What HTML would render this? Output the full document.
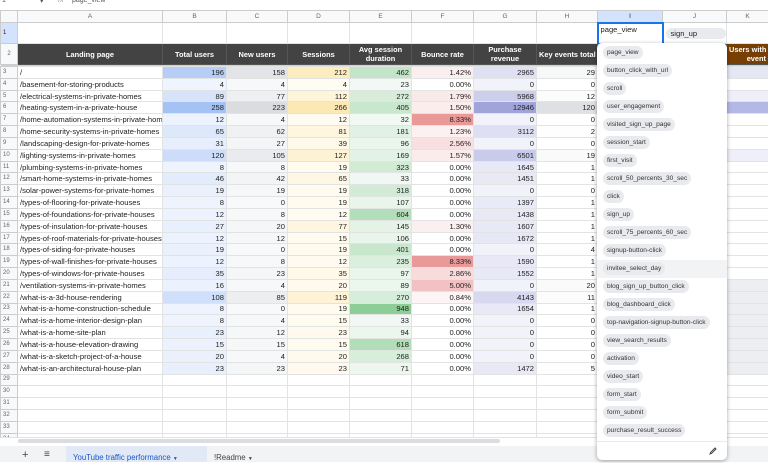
<!DOCTYPE html>
<html><head><meta charset="utf-8">
<style>
*{box-sizing:border-box;margin:0;padding:0}
body{width:768px;height:462px;overflow:hidden;background:#fff;font-family:"Liberation Sans",Arial,sans-serif;position:relative;color:#222}
#top{position:absolute;left:0;top:0;width:768px;height:10px;background:#fff;font-size:7px;color:#555;overflow:hidden}
table{position:absolute;left:0;top:10px;border-collapse:collapse;table-layout:fixed;width:768px}
td{border:1px solid #e2e3e3;font-size:7.6px;white-space:nowrap;overflow:hidden;padding:0 2px;height:11.84px;line-height:9px}
tr.hd td{height:12px;background:#f8f9fa;color:#666;text-align:center;font-size:6.5px;border-color:#ccc}
td.rn{background:#f8f9fa;color:#666;font-size:6px;text-align:left;padding-left:2px;border-color:#ccc}
tr.r1 td{height:21px}
tr.r2 td{height:21px;background:#434343;color:#fff;font-weight:bold;text-align:center;border-color:#555;line-height:9px;font-size:7.4px}
tr.r2 td.w{white-space:normal}
tr.r2 td.rn{background:#f8f9fa;color:#666;font-weight:normal;border-color:#ccc;font-size:6px}
tr.sep td{height:2px;padding:0;background:#d0d0d0;border:none;line-height:0;font-size:0}
td.n{text-align:right}
#dd{position:absolute;left:597px;top:43px;width:130px;height:417px;background:#fff;border-radius:5px;box-shadow:0 1px 4px rgba(0,0,0,.35)}
.chip{position:absolute;left:6px;height:13px;line-height:13px;background:#e8eaed;border-radius:7px;padding:0 4px;font-size:6.6px;color:#333;white-space:nowrap}
#tabs{position:absolute;left:0;top:446px;width:768px;height:16px;background:#f1f3f4}
</style></head><body>
<div id="top"><span style="position:absolute;left:2px;top:-3px">1</span><span style="position:absolute;left:40px;top:-3px">▾</span><span style="position:absolute;left:58px;top:-3px;font-style:italic;color:#999">fx</span><span style="position:absolute;left:72px;top:-3px">page_view</span></div>
<table id="t">
<colgroup><col style="width:17px"><col style="width:145px"><col style="width:64px"><col style="width:61px"><col style="width:62px"><col style="width:62px"><col style="width:62px"><col style="width:63px"><col style="width:61px"><col style="width:65px"><col style="width:64px"><col style="width:42px"></colgroup>
<tr class="hd"><td></td><td>A</td><td>B</td><td>C</td><td>D</td><td>E</td><td>F</td><td>G</td><td>H</td><td style="background:#d3e3fd;color:#222">I</td><td>J</td><td>K</td></tr>
<tr class="r1"><td class="rn" style="background:#d3e3fd;color:#222">1</td><td></td><td></td><td></td><td></td><td></td><td></td><td></td><td></td><td style="border:2px solid #1a73e8;vertical-align:top;padding-top:1px">page_view</td><td><span style="display:inline-block;background:#e8eaed;border-radius:6px;padding:0 5px;width:60px;line-height:11px">sign_up</span></td><td></td></tr>
<tr class="r2"><td class="rn">2</td><td>Landing page</td><td>Total users</td><td>New users</td><td>Sessions</td><td class="w">Avg session duration</td><td>Bounce rate</td><td class="w">Purchase revenue</td><td>Key events total</td><td></td><td></td><td style="background:#783f04;text-align:right;vertical-align:top;padding-top:1px">Users with<br>event</td></tr>
<tr class="sep"><td></td><td></td><td></td><td></td><td></td><td></td><td></td><td></td><td></td><td></td><td></td><td></td></tr>
<tr><td class="rn">3</td><td>/</td><td class="n">196</td><td class="n">158</td><td class="n">212</td><td class="n">462</td><td class="n">1.42%</td><td class="n">2965</td><td class="n">29</td><td></td><td></td><td style="background:#e6e7f5"></td></tr>
<tr><td class="rn">4</td><td>/basement-for-storing-products</td><td class="n">4</td><td class="n">4</td><td class="n">4</td><td class="n">23</td><td class="n">0.00%</td><td class="n">0</td><td class="n">0</td><td></td><td></td><td></td></tr>
<tr><td class="rn">5</td><td>/electrical-systems-in-private-homes</td><td class="n">89</td><td class="n">77</td><td class="n">112</td><td class="n">272</td><td class="n">1.79%</td><td class="n">5968</td><td class="n">12</td><td></td><td></td><td style="background:#eeeff8"></td></tr>
<tr><td class="rn">6</td><td>/heating-system-in-a-private-house</td><td class="n">258</td><td class="n">223</td><td class="n">266</td><td class="n">405</td><td class="n">1.50%</td><td class="n">12946</td><td class="n">120</td><td></td><td></td><td style="background:#b4b8e6"></td></tr>
<tr><td class="rn">7</td><td>/home-automation-systems-in-private-homes</td><td class="n">12</td><td class="n">4</td><td class="n">12</td><td class="n">32</td><td class="n">8.33%</td><td class="n">0</td><td class="n">0</td><td></td><td></td><td></td></tr>
<tr><td class="rn">8</td><td>/home-security-systems-in-private-homes</td><td class="n">65</td><td class="n">62</td><td class="n">81</td><td class="n">181</td><td class="n">1.23%</td><td class="n">3112</td><td class="n">2</td><td></td><td></td><td></td></tr>
<tr><td class="rn">9</td><td>/landscaping-design-for-private-homes</td><td class="n">31</td><td class="n">27</td><td class="n">39</td><td class="n">96</td><td class="n">2.56%</td><td class="n">0</td><td class="n">0</td><td></td><td></td><td></td></tr>
<tr><td class="rn">10</td><td>/lighting-systems-in-private-homes</td><td class="n">120</td><td class="n">105</td><td class="n">127</td><td class="n">169</td><td class="n">1.57%</td><td class="n">6501</td><td class="n">19</td><td></td><td></td><td style="background:#eeeff8"></td></tr>
<tr><td class="rn">11</td><td>/plumbing-systems-in-private-homes</td><td class="n">8</td><td class="n">8</td><td class="n">19</td><td class="n">323</td><td class="n">0.00%</td><td class="n">1645</td><td class="n">1</td><td></td><td></td><td></td></tr>
<tr><td class="rn">12</td><td>/smart-home-systems-in-private-homes</td><td class="n">46</td><td class="n">42</td><td class="n">65</td><td class="n">33</td><td class="n">0.00%</td><td class="n">1451</td><td class="n">1</td><td></td><td></td><td></td></tr>
<tr><td class="rn">13</td><td>/solar-power-systems-for-private-homes</td><td class="n">19</td><td class="n">19</td><td class="n">19</td><td class="n">318</td><td class="n">0.00%</td><td class="n">0</td><td class="n">0</td><td></td><td></td><td></td></tr>
<tr><td class="rn">14</td><td>/types-of-flooring-for-private-houses</td><td class="n">8</td><td class="n">0</td><td class="n">19</td><td class="n">107</td><td class="n">0.00%</td><td class="n">1397</td><td class="n">1</td><td></td><td></td><td></td></tr>
<tr><td class="rn">15</td><td>/types-of-foundations-for-private-houses</td><td class="n">12</td><td class="n">8</td><td class="n">12</td><td class="n">604</td><td class="n">0.00%</td><td class="n">1438</td><td class="n">1</td><td></td><td></td><td></td></tr>
<tr><td class="rn">16</td><td>/types-of-insulation-for-private-houses</td><td class="n">27</td><td class="n">20</td><td class="n">77</td><td class="n">145</td><td class="n">1.30%</td><td class="n">1607</td><td class="n">1</td><td></td><td></td><td></td></tr>
<tr><td class="rn">17</td><td>/types-of-roof-materials-for-private-houses</td><td class="n">12</td><td class="n">12</td><td class="n">15</td><td class="n">106</td><td class="n">0.00%</td><td class="n">1672</td><td class="n">1</td><td></td><td></td><td></td></tr>
<tr><td class="rn">18</td><td>/types-of-siding-for-private-houses</td><td class="n">19</td><td class="n">0</td><td class="n">19</td><td class="n">401</td><td class="n">0.00%</td><td class="n">0</td><td class="n">4</td><td></td><td></td><td></td></tr>
<tr><td class="rn">19</td><td>/types-of-wall-finishes-for-private-houses</td><td class="n">12</td><td class="n">8</td><td class="n">12</td><td class="n">235</td><td class="n">8.33%</td><td class="n">1590</td><td class="n">1</td><td></td><td></td><td></td></tr>
<tr><td class="rn">20</td><td>/types-of-windows-for-private-houses</td><td class="n">35</td><td class="n">23</td><td class="n">35</td><td class="n">97</td><td class="n">2.86%</td><td class="n">1552</td><td class="n">1</td><td></td><td></td><td></td></tr>
<tr><td class="rn">21</td><td>/ventilation-systems-in-private-homes</td><td class="n">16</td><td class="n">4</td><td class="n">20</td><td class="n">89</td><td class="n">5.00%</td><td class="n">0</td><td class="n">20</td><td></td><td></td><td style="background:#eceef1"></td></tr>
<tr><td class="rn">22</td><td>/what-is-a-3d-house-rendering</td><td class="n">108</td><td class="n">85</td><td class="n">119</td><td class="n">270</td><td class="n">0.84%</td><td class="n">4143</td><td class="n">11</td><td></td><td></td><td style="background:#eceef1"></td></tr>
<tr><td class="rn">23</td><td>/what-is-a-home-construction-schedule</td><td class="n">8</td><td class="n">0</td><td class="n">19</td><td class="n">948</td><td class="n">0.00%</td><td class="n">1654</td><td class="n">1</td><td></td><td></td><td style="background:#eceef1"></td></tr>
<tr><td class="rn">24</td><td>/what-is-a-home-interior-design-plan</td><td class="n">8</td><td class="n">4</td><td class="n">15</td><td class="n">33</td><td class="n">0.00%</td><td class="n">0</td><td class="n">0</td><td></td><td></td><td style="background:#eceef1"></td></tr>
<tr><td class="rn">25</td><td>/what-is-a-home-site-plan</td><td class="n">23</td><td class="n">12</td><td class="n">23</td><td class="n">94</td><td class="n">0.00%</td><td class="n">0</td><td class="n">0</td><td></td><td></td><td style="background:#eceef1"></td></tr>
<tr><td class="rn">26</td><td>/what-is-a-house-elevation-drawing</td><td class="n">15</td><td class="n">15</td><td class="n">15</td><td class="n">618</td><td class="n">0.00%</td><td class="n">0</td><td class="n">0</td><td></td><td></td><td style="background:#eceef1"></td></tr>
<tr><td class="rn">27</td><td>/what-is-a-sketch-project-of-a-house</td><td class="n">20</td><td class="n">4</td><td class="n">20</td><td class="n">268</td><td class="n">0.00%</td><td class="n">0</td><td class="n">0</td><td></td><td></td><td style="background:#eceef1"></td></tr>
<tr><td class="rn">28</td><td>/what-is-an-architectural-house-plan</td><td class="n">23</td><td class="n">23</td><td class="n">23</td><td class="n">71</td><td class="n">0.00%</td><td class="n">1472</td><td class="n">5</td><td></td><td></td><td style="background:#eceef1"></td></tr>
<tr><td class="rn">29</td><td></td><td></td><td></td><td></td><td></td><td></td><td></td><td></td><td></td><td></td><td></td></tr>
<tr><td class="rn">30</td><td></td><td></td><td></td><td></td><td></td><td></td><td></td><td></td><td></td><td></td><td></td></tr>
<tr><td class="rn">31</td><td></td><td></td><td></td><td></td><td></td><td></td><td></td><td></td><td></td><td></td><td></td></tr>
<tr><td class="rn">32</td><td></td><td></td><td></td><td></td><td></td><td></td><td></td><td></td><td></td><td></td><td></td></tr>
<tr><td class="rn">33</td><td></td><td></td><td></td><td></td><td></td><td></td><td></td><td></td><td></td><td></td><td></td></tr>
<tr><td class="rn">34</td><td></td><td></td><td></td><td></td><td></td><td></td><td></td><td></td><td></td><td></td><td></td></tr>
</table>
<div style="position:absolute;left:0;top:437px;width:768px;height:9px;background:#fff;border-top:1px solid #e2e3e3"></div>
<div style="position:absolute;left:18px;top:439px;width:482px;height:4px;background:#dadce0;border-radius:2px"></div>
<div id="tabs">
<span style="position:absolute;left:22px;top:3px;font-size:11px;color:#444">+</span>
<span style="position:absolute;left:44px;top:3px;font-size:10px;color:#444">≡</span>
<div style="position:absolute;left:66px;top:0;width:141px;height:16px;background:#e1e9f7;color:#1a57c5;font-size:7.8px;line-height:8px;padding-top:8px;padding-left:7px;white-space:nowrap">YouTube traffic performance <span style="font-size:5px">▼</span></div>
<span style="position:absolute;left:214px;top:8px;font-size:7.8px;line-height:8px;color:#444;white-space:nowrap">!Readme <span style="font-size:5px">▼</span></span>
</div>
<div id="dd">
<div style="position:absolute;left:0;top:217px;width:130px;height:18px;background:#f1f3f4"></div>
<div class="chip" style="top:3px">page_view</div>
<div class="chip" style="top:21px">button_click_with_url</div>
<div class="chip" style="top:39px">scroll</div>
<div class="chip" style="top:57px">user_engagement</div>
<div class="chip" style="top:75px">visited_sign_up_page</div>
<div class="chip" style="top:93px">session_start</div>
<div class="chip" style="top:111px">first_visit</div>
<div class="chip" style="top:129px">scroll_50_percents_30_sec</div>
<div class="chip" style="top:147px">click</div>
<div class="chip" style="top:165px">sign_up</div>
<div class="chip" style="top:183px">scroll_75_percents_60_sec</div>
<div class="chip" style="top:201px">signup-button-click</div>
<div class="chip" style="top:219px">invitee_select_day</div>
<div class="chip" style="top:237px">blog_sign_up_button_click</div>
<div class="chip" style="top:255px">blog_dashboard_click</div>
<div class="chip" style="top:273px">top-navigation-signup-button-click</div>
<div class="chip" style="top:291px">view_search_results</div>
<div class="chip" style="top:309px">activation</div>
<div class="chip" style="top:327px">video_start</div>
<div class="chip" style="top:345px">form_start</div>
<div class="chip" style="top:363px">form_submit</div>
<div class="chip" style="top:381px">purchase_result_success</div>
<div style="position:absolute;left:0;top:398px;width:130px;height:1px;background:#e8eaed"></div>
<svg style="position:absolute;left:111px;top:403px" width="10" height="10" viewBox="0 0 10 10"><path d="M2 8 L2.5 6.5 L7 2 L8 3 L3.5 7.5 Z" fill="none" stroke="#444" stroke-width="1"/></svg>
</div>
<script>
var cfg={2:[258,[164,194,244]],3:[223,[218,220,224]],4:[266,[252,232,178]],5:[948,[140,206,150]],6:[8.33,[234,153,153]],7:[12946,[160,164,218]],8:[120,[222,224,228]]};
var rows=document.querySelectorAll('#t tr');
for(var i=4;i<rows.length;i++){var c=rows[i].cells;if(c.length<12||!c[2].textContent)continue;
for(var k=2;k<=8;k++){var v=parseFloat(c[k].textContent),m=cfg[k][0],col=cfg[k][1],f=Math.min(1,v/m);
var base=[255,255,255];if(k==2)base=[240,245,254];if(k==3)base=[248,249,250];if(k==4)base=[255,252,243];if(k==5)base=[245,250,246];if(k==7)base=[242,242,250];
var r=base.map(function(b,j){return Math.round(b+(col[j]-b)*f)});
c[k].style.background='rgb('+r.join(',')+')';}}
</script>
</body></html>
